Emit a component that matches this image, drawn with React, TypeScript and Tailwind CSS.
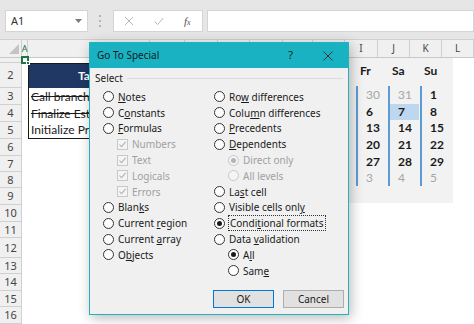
import React from 'react';

type Opt = {
  label: string;
  u: number;
  kind?: 'radio' | 'check';
  indent?: boolean;
  checked?: boolean;
  disabled?: boolean;
  focus?: boolean;
};

const leftOpts: Opt[] = [
  { label: 'Notes', u: 0 },
  { label: 'Constants', u: 1 },
  { label: 'Formulas', u: 0 },
  { label: 'Numbers', u: -1, kind: 'check', indent: true, checked: true, disabled: true },
  { label: 'Text', u: -1, kind: 'check', indent: true, checked: true, disabled: true },
  { label: 'Logicals', u: -1, kind: 'check', indent: true, checked: true, disabled: true },
  { label: 'Errors', u: -1, kind: 'check', indent: true, checked: true, disabled: true },
  { label: 'Blanks', u: 4 },
  { label: 'Current region', u: 8 },
  { label: 'Current array', u: 8 },
  { label: 'Objects', u: 1 },
];

const rightOpts: Opt[] = [
  { label: 'Row differences', u: 2 },
  { label: 'Column differences', u: 4 },
  { label: 'Precedents', u: 0 },
  { label: 'Dependents', u: 0 },
  { label: 'Direct only', u: -1, indent: true, checked: true, disabled: true },
  { label: 'All levels', u: -1, indent: true, disabled: true },
  { label: 'Last cell', u: 2 },
  { label: 'Visible cells only', u: 17 },
  { label: 'Conditional formats', u: 5, checked: true, focus: true },
  { label: 'Data validation', u: 5 },
  { label: 'All', u: 1, indent: true, checked: true },
  { label: 'Same', u: 3, indent: true },
];

const sheetRows = [
  { n: '', h: 'h-[5px]' },
  { n: '2', h: 'h-[25px]' },
  { n: '3', h: 'h-[17px]' },
  { n: '4', h: 'h-[17px]' },
  { n: '5', h: 'h-[17px]' },
  { n: '6', h: 'h-[17px]' },
  { n: '7', h: 'h-[16px]' },
  { n: '8', h: 'h-[16px]' },
  { n: '9', h: 'h-[17px]' },
  { n: '10', h: 'h-[17px]' },
  { n: '11', h: 'h-[16px]' },
  { n: '12', h: 'h-[20px]' },
  { n: '13', h: 'h-[16px]' },
  { n: '14', h: 'h-[17px]' },
  { n: '15', h: 'h-[16px]' },
  { n: '16', h: 'h-[17px]' },
];

// columns C..H sit under the dialog, so only their edges show
const columns = [
  { l: '', w: 'w-[35px]' },
  { l: '', w: 'w-[33px]' },
  { l: '', w: 'w-[32px]' },
  { l: '', w: 'w-[33px]' },
  { l: '', w: 'w-[30px]' },
  { l: '', w: 'w-[32px]' },
  { l: 'I', w: 'w-[33px]' },
  { l: 'J', w: 'w-[32px]' },
  { l: 'K', w: 'w-[32px]' },
  { l: 'L', w: 'w-[32px]' },
];

const calendar = [
  [
    { d: '30', m: true },
    { d: '6' },
    { d: '13' },
    { d: '20' },
    { d: '27' },
    { d: '3', m: true },
  ],
  [
    { d: '31', m: true },
    { d: '7', sel: true },
    { d: '14' },
    { d: '21' },
    { d: '28' },
    { d: '4', m: true },
  ],
  [
    { d: '1' },
    { d: '8' },
    { d: '15' },
    { d: '22' },
    { d: '29' },
    { d: '5', m: true },
  ],
];

function Label({ text, u }: { text: string; u: number }) {
  if (u < 0) return <>{text}</>;
  return (
    <>
      {text.slice(0, u)}
      <u className="underline-offset-[1px]">{text[u]}</u>
      {text.slice(u + 1)}
    </>
  );
}

function Radio({ checked, disabled }: { checked?: boolean; disabled?: boolean }) {
  return (
    <span
      className={`flex h-[11px] w-[11px] shrink-0 items-center justify-center rounded-full border ${
        disabled ? 'border-[#c8c8c8] bg-[#f4f4f4]' : 'border-[#333333] bg-white'
      }`}
    >
      {checked && (
        <span className={`h-[5px] w-[5px] rounded-full ${disabled ? 'bg-[#b4b4b4]' : 'bg-[#1a1a1a]'}`} />
      )}
    </span>
  );
}

function Check() {
  return (
    <span className="flex h-[11px] w-[11px] shrink-0 items-center justify-center border border-[#c8c8c8] bg-[#f4f4f4]">
      <svg width="9" height="9" viewBox="0 0 9 9">
        <path d="M1.5 4.5 L3.5 6.7 L7.6 1.8" fill="none" stroke="#b4b4b4" strokeWidth="1.1" />
      </svg>
    </span>
  );
}

function Option({ o }: { o: Opt }) {
  return (
    <div className={`flex h-[15.8px] items-center gap-[3px] ${o.indent ? 'pl-[14px]' : ''}`}>
      {o.kind === 'check' ? <Check /> : <Radio checked={o.checked} disabled={o.disabled} />}
      <span
        className={`whitespace-nowrap leading-none ${o.disabled ? 'text-[#a0a0a0]' : 'text-[#1a1a1a]'} ${
          o.focus ? 'border border-dotted border-[#333333] px-[1px] py-[2px]' : 'px-[1px]'
        }`}
      >
        <Label text={o.label} u={o.u} />
      </span>
    </div>
  );
}

function GoToSpecial() {
  return (
    <div className="absolute left-[89px] top-[42px] flex h-[273px] w-[260px] flex-col border border-[#22b1c0] bg-[#f0f0f0] font-['Noto_Sans',sans-serif] text-[10px] shadow-[2px_3px_12px_rgba(0,0,0,0.28)]">
      <div className="flex h-[25px] shrink-0 items-center bg-[#19b2c3] pl-[7px] text-[10px] text-[#1a1a1a]">
        <span>Go To Special</span>
        <span className="ml-auto mr-[30px] text-[11px]">?</span>
        <svg width="10" height="10" viewBox="0 0 10 10" className="mr-[15px]">
          <path d="M0.5 0.5 L9.5 9.5 M9.5 0.5 L0.5 9.5" stroke="#333333" strokeWidth="1" />
        </svg>
      </div>
      <div className="flex h-[21px] shrink-0 items-center pl-[5px] pr-[5px] text-[#1a1a1a]">
        <span>Select</span>
        <div className="ml-[4px] h-px flex-1 bg-[#dcdcdc]" />
      </div>
      <div className="flex">
        <div className="w-[124px] pl-[13px]">
          {leftOpts.map((o) => (
            <Option key={o.label} o={o} />
          ))}
        </div>
        <div>
          {rightOpts.map((o) => (
            <Option key={o.label} o={o} />
          ))}
        </div>
      </div>
      <div className="mt-auto flex justify-end gap-[9px] pb-[6px] pr-[4px]">
        <button className="flex h-[18px] w-[61px] items-center justify-center border border-[#0078d7] bg-[#e1e1e1] text-[#1a1a1a]">
          OK
        </button>
        <button className="flex h-[18px] w-[61px] items-center justify-center border border-[#adadad] bg-[#e1e1e1] text-[#1a1a1a]">
          Cancel
        </button>
      </div>
    </div>
  );
}

function Calendar() {
  return (
    <div className="absolute left-[349px] top-[58px] h-[145px] w-[104px] bg-[#f2f2f2] pl-[7px] pt-[5px] font-['Lato',sans-serif] text-[12px] font-bold text-[#1a1a1a]">
      <div className="flex h-[16px] items-center">
        {['Fr', 'Sa', 'Su'].map((d) => (
          <span key={d} className="w-[32px] pl-[4px]">
            {d}
          </span>
        ))}
      </div>
      <div className="mt-[7px] flex">
        {calendar.map((col, i) => (
          <div key={i} className="flex h-[100px] w-[32px] flex-col border-l-2 border-[#5b9bd5] pt-[1px]">
            {col.map((c) => (
              <div
                key={c.d}
                className={`flex h-[16.6px] w-[29px] items-center pl-[8px] ${c.sel ? 'bg-[#bdd7ee]' : ''} ${
                  c.m ? 'font-normal text-[#a6a6a6]' : ''
                }`}
              >
                {c.d}
              </div>
            ))}
          </div>
        ))}
      </div>
    </div>
  );
}

export default function App() {
  return (
    <div className="relative h-[324px] w-[474px] overflow-hidden bg-white font-['Noto_Sans',sans-serif]">
      {/* formula bar */}
      <div className="flex h-[40px] items-start border-b border-[#d0d0d0] bg-[#e6e6e6] pl-[5px] pt-[10px]">
        <div className="flex h-[22px] w-[83px] items-center justify-between border border-[#d4d4d4] bg-white pl-[5px] pr-[5px] text-[11px] text-[#333333]">
          <span>A1</span>
          <svg width="7" height="4" viewBox="0 0 7 4">
            <path d="M0 0 L7 0 L3.5 4 Z" fill="#7a7a7a" />
          </svg>
        </div>
        <div className="ml-[11px] flex h-[22px] w-[2px] flex-col items-center justify-center gap-[3px]">
          <span className="h-[2px] w-[2px] bg-[#b4b4b4]" />
          <span className="h-[2px] w-[2px] bg-[#b4b4b4]" />
          <span className="h-[2px] w-[2px] bg-[#b4b4b4]" />
        </div>
        <div className="ml-[12px] flex h-[22px] w-[90px] items-center border border-[#d4d4d4] bg-white">
          <svg width="10" height="10" viewBox="0 0 10 10" className="ml-[10px]">
            <path d="M1 1 L9 9 M9 1 L1 9" stroke="#b8b8b8" strokeWidth="1" />
          </svg>
          <svg width="10" height="9" viewBox="0 0 10 9" className="ml-[20px]">
            <path d="M0.8 4.5 L3.6 7.6 L9.2 1" fill="none" stroke="#b8b8b8" strokeWidth="1" />
          </svg>
          <span className="ml-[20px] font-['Liberation_Serif',serif] text-[11px] italic text-[#555555]">
            f<span className="text-[8px]">x</span>
          </span>
        </div>
        <div className="ml-[4px] h-[22px] flex-1 border border-[#d4d4d4] bg-white" />
      </div>

      {/* column headers */}
      <div className="flex h-[18px] border-b border-[#c8c8c8] bg-[#f0f0f0] text-[10px] text-[#444444]">
        <div className="w-[22px] border-r border-[#d0d0d0]">
          <svg width="22" height="18" viewBox="0 0 22 18">
            <path d="M19 4 L19 14 L9 14 Z" fill="#c4c4c4" />
          </svg>
        </div>
        <div className="flex w-[6px] items-center justify-center overflow-visible border-r border-[#d0d0d0] text-[9px] text-[#217346]">
          A
        </div>
        <div className="w-[132px] border-r border-[#d0d0d0]" />
        {columns.map((c, i) => (
          <div key={i} className={`flex ${c.w} shrink-0 items-center justify-center border-r border-[#d0d0d0]`}>
            {c.l}
          </div>
        ))}
      </div>

      {/* rows; column B is cut where the dialog covers it */}
      <div className="font-['Lato',sans-serif] text-[12px] text-[#1a1a1a]">
        {sheetRows.map((r, i) => (
          <div key={i} className={`flex ${r.h}`}>
            <div className="flex w-[22px] items-center justify-center border-b border-r border-[#d0d0d0] bg-[#f0f0f0] pt-[1px] font-['Noto_Sans',sans-serif] text-[11px] text-[#444444]">
              {r.n}
            </div>
            <div className="w-[6px]" />
            {r.n === '2' && (
              <div className="flex w-[61px] items-center overflow-hidden whitespace-nowrap border-l border-t border-[#1a1a1a] bg-[#1f3864] pl-[49px] font-bold text-white">
                Tasks
              </div>
            )}
            {r.n === '3' && (
              <div className="flex w-[61px] items-center overflow-hidden whitespace-nowrap border-l border-[#1a1a1a] pl-[2px] line-through">
                Call branch manager
              </div>
            )}
            {r.n === '4' && (
              <div className="flex w-[61px] items-center overflow-hidden whitespace-nowrap border-l border-[#1a1a1a] pl-[2px] line-through">
                Finalize Estimate
              </div>
            )}
            {r.n === '5' && (
              <div className="flex w-[61px] items-center overflow-hidden whitespace-nowrap border-b border-l border-[#1a1a1a] pl-[2px]">
                Initialize Project
              </div>
            )}
          </div>
        ))}
      </div>

      {/* active cell A1 */}
      <div className="absolute left-[21px] top-[56px] h-[8px] w-[8px] border-2 border-[#217346]" />
      <div className="absolute left-[26px] top-[61px] h-[4px] w-[4px] border border-white bg-[#217346]" />

      <Calendar />
      <GoToSpecial />
    </div>
  );
}
